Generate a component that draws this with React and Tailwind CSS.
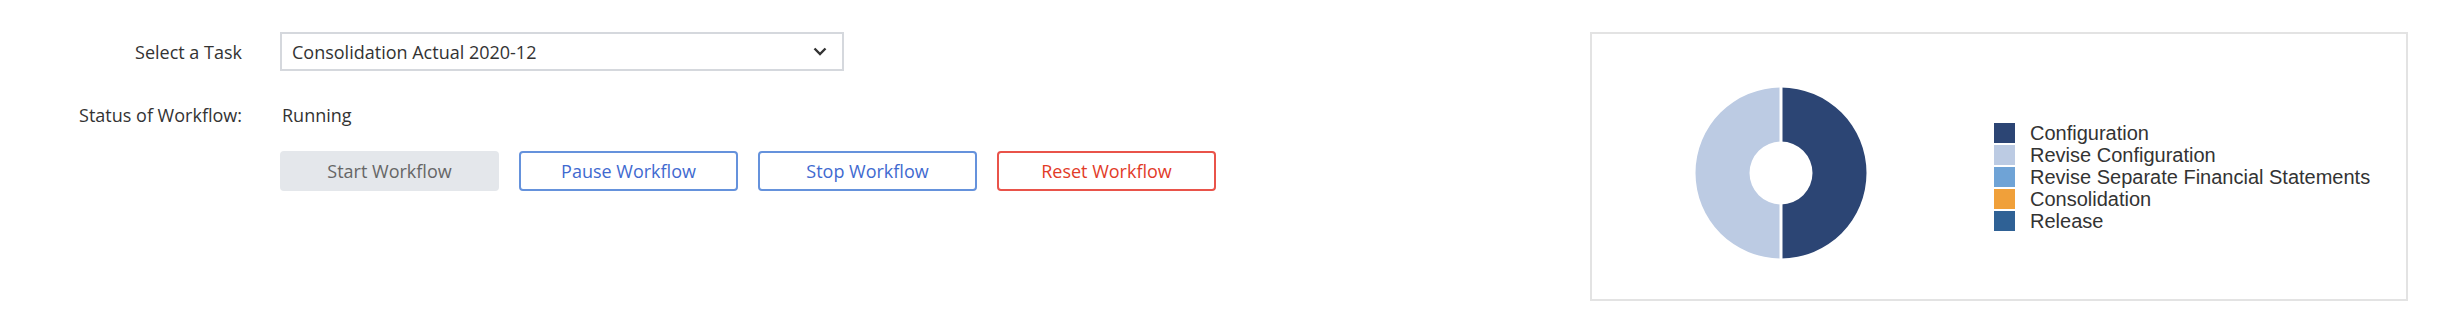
import React from "react";

const legend = [
  { label: "Configuration", color: "bg-[#2c4574]" },
  { label: "Revise Configuration", color: "bg-[#bccbe3]" },
  { label: "Revise Separate Financial Statements", color: "bg-[#6fa3d6]" },
  { label: "Consolidation", color: "bg-[#f0a03a]" },
  { label: "Release", color: "bg-[#2f6195]" },
];

function Donut() {
  const s = 172;
  const c = s / 2;
  const R = 85.5;
  const r = 31.5;
  const right = `M ${c} ${c - R} A ${R} ${R} 0 0 1 ${c} ${c + R} L ${c} ${c + r} A ${r} ${r} 0 0 0 ${c} ${c - r} Z`;
  const left = `M ${c} ${c - R} A ${R} ${R} 0 0 0 ${c} ${c + R} L ${c} ${c + r} A ${r} ${r} 0 0 1 ${c} ${c - r} Z`;
  return (
    <svg width={s} height={s} viewBox={`0 0 ${s} ${s}`} className="block">
      <path d={right} fill="#2c4574" />
      <path d={left} fill="#bccbe3" />
      <line x1={c} y1={0} x2={c} y2={s} stroke="#ffffff" strokeWidth="3" />
    </svg>
  );
}

export default function App() {
  return (
    <div
      className="w-full h-[321px] bg-white flex items-start pt-[32px] pr-[33px] text-[#333333]"
      style={{ fontFamily: '"Open Sans", "Noto Sans", sans-serif' }}
    >
      <div className="flex flex-col">
        <div className="flex items-center h-[39px]">
          <div className="w-[242px] text-right text-[18px] leading-[28px]">Select a Task</div>
          <div className="ml-[38px] w-[564px] h-[39px] border-2 border-[#d5d8dd] flex items-center justify-between pl-[10px] pr-[15px]">
            <span className="text-[18px] leading-[28px] text-[#333333]">Consolidation Actual 2020-12</span>
            <svg width="14" height="9" viewBox="0 0 14 9" className="block">
              <polyline points="1.5,1.5 7,7 12.5,1.5" fill="none" stroke="#333333" strokeWidth="2.4" />
            </svg>
          </div>
        </div>
        <div className="flex items-center h-[28px] mt-[30px]">
          <div className="w-[242px] text-right text-[18px] leading-[28px]">Status of Workflow:</div>
          <div className="ml-[40px] text-[18px] leading-[28px]">Running</div>
        </div>
        <div className="flex gap-[20px] ml-[280px] mt-[22px]">
          <button className="w-[219px] h-[40px] rounded-[4px] bg-[#e4e7eb] text-[#666666] text-[18px]">Start Workflow</button>
          <button className="w-[219px] h-[40px] rounded-[4px] border-2 border-[#6592dc] bg-white text-[#3f6ad0] text-[18px]">Pause Workflow</button>
          <button className="w-[219px] h-[40px] rounded-[4px] border-2 border-[#6592dc] bg-white text-[#3f6ad0] text-[18px]">Stop Workflow</button>
          <button className="w-[219px] h-[40px] rounded-[4px] border-2 border-[#e9534a] bg-white text-[#e23b28] text-[18px]">Reset Workflow</button>
        </div>
      </div>
      <div className="ml-auto w-[818px] h-[269px] border-2 border-[#e3e3e3] flex items-start">
        <div className="ml-[103px] mt-[53px]">
          <Donut />
        </div>
        <div
          className="ml-[127px] mt-[89px] flex flex-col gap-[2px] text-[20px] leading-[20px] text-[#333333]"
          style={{ fontFamily: '"Liberation Sans", Arial, sans-serif' }}
        >
          {legend.map((l) => (
            <div key={l.label} className="flex items-center h-[20px]">
              <span className={`w-[21px] h-[20px] ${l.color}`} />
              <span className="ml-[15px]">{l.label}</span>
            </div>
          ))}
        </div>
      </div>
    </div>
  );
}
